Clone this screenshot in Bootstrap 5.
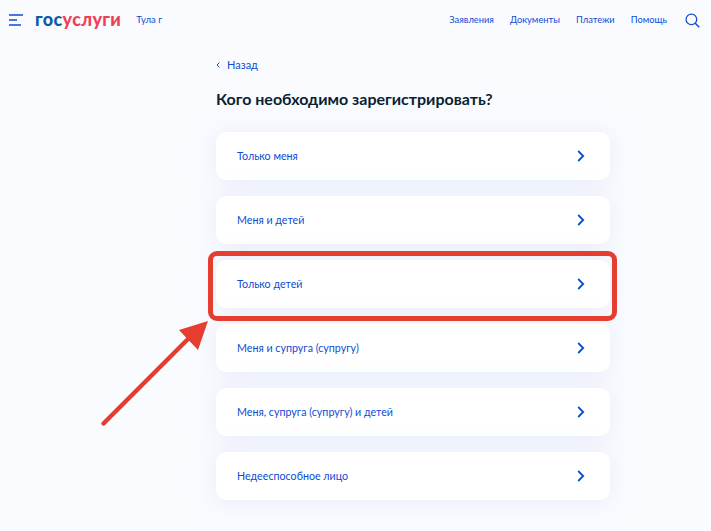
<!DOCTYPE html>
<html lang="ru">
<head>
<meta charset="utf-8">
<title>Госуслуги</title>
<link href="https://cdn.jsdelivr.net/npm/bootstrap@5.3.0/dist/css/bootstrap.min.css" rel="stylesheet">
<style>
html,body{height:531px;overflow:hidden}
body{font-family:Lato,"Noto Sans",sans-serif;background:#fafbff;color:#0b1f33;position:relative}
a{text-decoration:none}
.hdr{height:40px;padding:0 11px 0 9px}
.burger{width:14px;height:12px;margin-top:-1px}
.logo{font-size:18px;font-weight:900;letter-spacing:.35px;line-height:1;margin-left:12px;margin-top:-3px}
.logo .l1{color:#0b5aa6}
.logo .l2{color:#ee3f58}
.city{font-size:9.5px;color:#0d4cd3;margin-left:15px}
.menu{gap:16px;font-size:9.3px;margin-right:18px}
.menu a{color:#0d4cd3}
.wrap{width:394px;margin-left:216px}
.back{font-size:11px;color:#0d4cd3;margin-top:18px;line-height:14px;gap:7px}
.ttl{font-size:16px;font-weight:700;line-height:20px;margin:17px 0 23px;color:#0b1f33}
.opts{gap:16px}
.opt{height:48px;background:#fff;border-radius:10px;box-shadow:0 2px 24px rgba(200,212,235,.38);padding:0 25px 0 21px;color:#0d4cd3;font-size:10.7px}
.frame{position:absolute;left:208px;top:251px;width:409px;height:70px;border:5px solid #e53d30;border-radius:9px;pointer-events:none}
.arw{position:absolute;left:95px;top:315px;pointer-events:none}
</style>
</head>
<body>
<header class="hdr d-flex align-items-center">
  <svg class="burger" viewBox="0 0 14 12" aria-hidden="true"><path d="M0 1h14M0 6h8M0 11h12" stroke="#0d4cd3" stroke-width="1.6" fill="none"/></svg>
  <a class="logo" href="#"><span class="l1">гос</span><span class="l2">услуги</span></a>
  <a class="city" href="#">Тула г</a>
  <nav class="menu d-flex ms-auto">
    <a href="#">Заявления</a><a href="#">Документы</a><a href="#">Платежи</a><a href="#">Помощь</a>
  </nav>
  <svg width="15" height="15" viewBox="0 0 15 15" aria-hidden="true"><circle cx="6.4" cy="6.4" r="5.3" stroke="#0d4cd3" stroke-width="1.3" fill="none"/><path d="M10.2 10.2l4 4" stroke="#0d4cd3" stroke-width="1.5" fill="none"/></svg>
</header>
<main class="wrap">
  <a class="back d-flex align-items-center" href="#">
    <svg width="4" height="6" viewBox="0 0 4 6" aria-hidden="true"><path d="M3.4.6L1 3l2.4 2.4" stroke="#0d4cd3" stroke-width="1" fill="none"/></svg>
    <span>Назад</span>
  </a>
  <h1 class="ttl">Кого необходимо зарегистрировать?</h1>
  <div class="opts d-flex flex-column">
    <a class="opt d-flex align-items-center justify-content-between" href="#"><span>Только меня</span><svg width="8" height="12" viewBox="0 0 8 12" aria-hidden="true"><path d="M1.2 1l5 5-5 5" stroke="#0d4cd3" stroke-width="1.8" fill="none"/></svg></a>
    <a class="opt d-flex align-items-center justify-content-between" href="#"><span>Меня и детей</span><svg width="8" height="12" viewBox="0 0 8 12" aria-hidden="true"><path d="M1.2 1l5 5-5 5" stroke="#0d4cd3" stroke-width="1.8" fill="none"/></svg></a>
    <a class="opt d-flex align-items-center justify-content-between" href="#"><span>Только детей</span><svg width="8" height="12" viewBox="0 0 8 12" aria-hidden="true"><path d="M1.2 1l5 5-5 5" stroke="#0d4cd3" stroke-width="1.8" fill="none"/></svg></a>
    <a class="opt d-flex align-items-center justify-content-between" href="#"><span>Меня и супруга (супругу)</span><svg width="8" height="12" viewBox="0 0 8 12" aria-hidden="true"><path d="M1.2 1l5 5-5 5" stroke="#0d4cd3" stroke-width="1.8" fill="none"/></svg></a>
    <a class="opt d-flex align-items-center justify-content-between" href="#"><span>Меня, супруга (супругу) и детей</span><svg width="8" height="12" viewBox="0 0 8 12" aria-hidden="true"><path d="M1.2 1l5 5-5 5" stroke="#0d4cd3" stroke-width="1.8" fill="none"/></svg></a>
    <a class="opt d-flex align-items-center justify-content-between" href="#"><span>Недееспособное лицо</span><svg width="8" height="12" viewBox="0 0 8 12" aria-hidden="true"><path d="M1.2 1l5 5-5 5" stroke="#0d4cd3" stroke-width="1.8" fill="none"/></svg></a>
  </div>
</main>
<div class="frame"></div>
<svg class="arw" width="120" height="120" viewBox="0 0 120 120" aria-hidden="true">
  <path d="M8.5 108.500L95 22" stroke="#e53d30" stroke-width="4.500" stroke-linecap="round" fill="none"/>
  <polygon points="113,6 84,15 103,35" fill="#e53d30"/>
</svg>
<script src="https://cdn.jsdelivr.net/npm/bootstrap@5.3.0/dist/js/bootstrap.bundle.min.js"></script>
</body>
</html>
